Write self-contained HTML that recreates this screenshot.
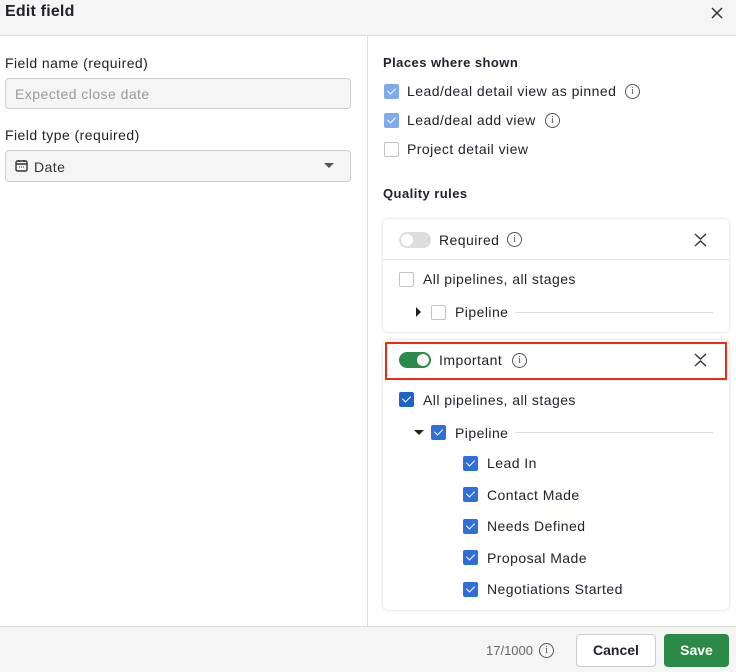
<!DOCTYPE html>
<html><head><style>
*{box-sizing:border-box;margin:0;padding:0}
body{width:736px;height:672px;overflow:hidden;background:#fff;font-family:"Liberation Sans",sans-serif;color:#21232c;font-size:14px;position:relative;letter-spacing:.45px}
.a{position:absolute;white-space:nowrap}
.cb{position:absolute;width:15px;height:15px;border:1.5px solid #c4c4c6;border-radius:2px;background:#fff}
.cb.on{background:#2f6fd8;border-color:#2f6fd8}
.cb.lt{background:#7eaaee;border-color:#7eaaee}
.cb.on::after,.cb.lt::after{content:"";position:absolute;left:4px;top:1px;width:4px;height:7px;border:solid #fff;border-width:0 1.8px 1.8px 0;transform:rotate(45deg)}
.info{position:absolute;width:15px;height:15px;border:1.3px solid #555;border-radius:50%;font-size:10px;text-align:center;line-height:13px;color:#555;font-family:"Liberation Serif",serif;letter-spacing:0}
</style></head><body>
<div class="a" style="left:0;top:0;width:736px;height:36px;background:#f5f5f5;border-bottom:1px solid #ddd"></div>
<div class="a" style="left:5px;top:3px;font-size:16px;font-weight:bold;letter-spacing:.2px">Edit field</div>
<svg class="a" style="left:710px;top:6px" width="14" height="14"><path d="M2 2L12 12M12 2L2 12" stroke="#333" stroke-width="1.5"/></svg>
<div class="a" style="left:367px;top:36px;width:1px;height:590px;background:#ddd"></div>

<div class="a" style="left:5px;top:55px">Field name (required)</div>
<div class="a" style="left:5px;top:78px;width:346px;height:31px;background:#f5f5f5;border:1px solid #ccc;border-radius:4px;color:#999;padding:7px 9px">Expected close date</div>
<div class="a" style="left:5px;top:127px">Field type (required)</div>
<div class="a" style="left:5px;top:150px;width:346px;height:32px;background:#f5f5f5;border:1px solid #ccc;border-radius:4px;padding:8px 28px;color:#333">Date</div>
<svg class="a" style="left:15px;top:159px" width="13" height="13"><rect x="1" y="2" width="11" height="10" rx="1.5" fill="none" stroke="#333" stroke-width="1.4"/><path d="M1 5H12M4 1V3M9 1V3" stroke="#333" stroke-width="1.4"/><path d="M4 8H5M6 8H7M8 8H9" stroke="#333"/></svg>
<svg class="a" style="left:324px;top:163px" width="11" height="6"><path d="M0 0H10L5 5Z" fill="#555"/></svg>

<div class="a" style="left:383px;top:55px;font-size:13px;font-weight:bold">Places where shown</div>
<div class="cb lt" style="left:384px;top:84px"></div><div class="a" style="left:407px;top:83px">Lead/deal detail view as pinned</div><div class="info" style="left:625px;top:84px">i</div>
<div class="cb lt" style="left:384px;top:113px"></div><div class="a" style="left:407px;top:112px">Lead/deal add view</div><div class="info" style="left:545px;top:113px">i</div>
<div class="cb" style="left:384px;top:142px"></div><div class="a" style="left:407px;top:141px">Project detail view</div>
<div class="a" style="left:383px;top:186px;font-size:13px;font-weight:bold">Quality rules</div>

<div class="a" style="left:383px;top:219px;width:346px;height:113px;border-radius:5px;box-shadow:0 0 3px rgba(0,0,0,.18)"></div>
<div class="a" style="left:399px;top:232px;width:32px;height:16px;border-radius:8px;background:#ddd"><div style="position:absolute;left:2px;top:2px;width:12px;height:12px;border-radius:50%;background:#fff"></div></div>
<div class="a" style="left:439px;top:232px">Required</div><div class="info" style="left:507px;top:232px">i</div>
<svg class="a" style="left:694px;top:233px" width="13" height="14"><path d="M1 1L6.5 6L12 1M1 13L6.5 8L12 13" fill="none" stroke="#333" stroke-width="1.4"/></svg>
<div class="a" style="left:383px;top:259px;width:346px;height:1px;background:#e2e2e2"></div>
<div class="cb" style="left:399px;top:272px"></div><div class="a" style="left:423px;top:271px">All pipelines, all stages</div>
<svg class="a" style="left:416px;top:307px" width="6" height="10"><path d="M0 0L5 5L0 10Z" fill="#222"/></svg>
<div class="cb" style="left:431px;top:305px"></div><div class="a" style="left:455px;top:304px">Pipeline</div>
<div class="a" style="left:515px;top:312px;width:198px;height:1px;background:#ddd"></div>

<div class="a" style="left:383px;top:340px;width:346px;height:270px;border-radius:5px;box-shadow:0 0 3px rgba(0,0,0,.18)"></div>
<div class="a" style="left:385px;top:342px;width:342px;height:38px;border:2px solid #f02a10"></div>
<div class="a" style="left:399px;top:352px;width:32px;height:16px;border-radius:8px;background:#2b8a47"><div style="position:absolute;left:18px;top:2px;width:12px;height:12px;border-radius:50%;background:#fff"></div></div>
<div class="a" style="left:439px;top:352px">Important</div><div class="info" style="left:512px;top:353px">i</div>
<svg class="a" style="left:694px;top:353px" width="13" height="14"><path d="M1 1L6.5 6L12 1M1 13L6.5 8L12 13" fill="none" stroke="#333" stroke-width="1.4"/></svg>
<div class="cb on" style="left:399px;top:392px;background:#1f63c9;border-color:#1f63c9"></div><div class="a" style="left:423px;top:392px">All pipelines, all stages</div>
<svg class="a" style="left:414px;top:430px" width="10" height="6"><path d="M0 0H10L5 5Z" fill="#222"/></svg>
<div class="cb on" style="left:431px;top:425px"></div><div class="a" style="left:455px;top:425px">Pipeline</div>
<div class="a" style="left:515px;top:432px;width:198px;height:1px;background:#ddd"></div>
<div class="cb on" style="left:463px;top:456px"></div><div class="a" style="left:487px;top:455px">Lead In</div>
<div class="cb on" style="left:463px;top:487px"></div><div class="a" style="left:487px;top:487px">Contact Made</div>
<div class="cb on" style="left:463px;top:519px"></div><div class="a" style="left:487px;top:518px">Needs Defined</div>
<div class="cb on" style="left:463px;top:550px"></div><div class="a" style="left:487px;top:550px">Proposal Made</div>
<div class="cb on" style="left:463px;top:582px"></div><div class="a" style="left:487px;top:581px">Negotiations Started</div>

<div class="a" style="left:0;top:626px;width:736px;height:46px;background:#f5f5f5;border-top:1px solid #ddd"></div>
<div class="a" style="left:486px;top:643px;font-size:13px;color:#666;letter-spacing:0">17/1000</div>
<div class="info" style="left:539px;top:643px">i</div>
<div class="a" style="left:576px;top:634px;width:80px;height:33px;background:#fff;border:1px solid #ccc;border-radius:4px;text-align:center;line-height:31px;font-weight:bold;letter-spacing:0">Cancel</div>
<div class="a" style="left:664px;top:634px;width:65px;height:33px;background:#2b8a47;border-radius:4px;text-align:center;line-height:33px;font-weight:bold;color:#fff;letter-spacing:0">Save</div>
</body></html>
